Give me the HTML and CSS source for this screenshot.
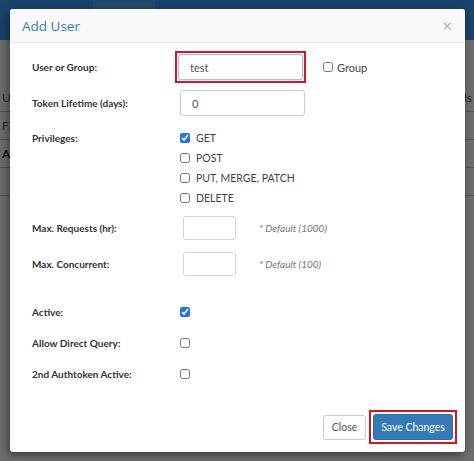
FILE: index.html
```html
<!DOCTYPE html>
<html>
<head>
<meta charset="utf-8">
<link rel="stylesheet" href="styles.css">
</head>
<body>
<div class="page">
  <div class="navbar"><span class="nav-active"></span></div>
  <div class="page-body">
    <div class="pg-row"><span class="pg-text">Users</span><span class="pg-text right">Tools</span></div>
    <div class="pg-row"><span class="pg-text">Filter</span></div>
    <div class="pg-row"><span class="pg-text bold">Auth</span></div>
    <div class="pg-row"></div>
  </div>
</div>
<div class="backdrop"></div>
<div class="modal">
  <div class="modal-header">
    <h4 class="modal-title">Add User</h4>
    <span class="close-x">&times;</span>
  </div>
  <div class="modal-body">
    <div class="form-row r-user">
      <label class="lbl">User or Group:</label>
      <div class="ctl">
        <span class="hl-box"><input class="txt focus" type="text" value="test"></span>
        <label class="grp"><input type="checkbox" class="cb"> Group</label>
      </div>
    </div>
    <div class="form-row r-token">
      <label class="lbl">Token Lifetime (days):</label>
      <div class="ctl"><input class="txt" type="text" value="0"></div>
    </div>
    <div class="form-row r-priv">
      <label class="lbl">Privileges:</label>
      <div class="ctl checks">
        <label class="chk"><input type="checkbox" class="cb" checked> GET</label>
        <label class="chk"><input type="checkbox" class="cb"> POST</label>
        <label class="chk"><input type="checkbox" class="cb"> PUT, MERGE, PATCH</label>
        <label class="chk"><input type="checkbox" class="cb"> DELETE</label>
      </div>
    </div>
    <div class="form-row r-num">
      <label class="lbl">Max. Requests (hr):</label>
      <div class="ctl"><input class="num" type="text"><span class="help">* Default (1000)</span></div>
    </div>
    <div class="form-row r-num">
      <label class="lbl">Max. Concurrent:</label>
      <div class="ctl"><input class="num" type="text"><span class="help">* Default (100)</span></div>
    </div>
    <div class="flags">
      <div class="form-row r-flag">
        <label class="lbl">Active:</label>
        <div class="ctl"><input type="checkbox" class="cb" checked></div>
      </div>
      <div class="form-row r-flag">
        <label class="lbl">Allow Direct Query:</label>
        <div class="ctl"><input type="checkbox" class="cb"></div>
      </div>
      <div class="form-row r-flag">
        <label class="lbl">2nd Authtoken Active:</label>
        <div class="ctl"><input type="checkbox" class="cb"></div>
      </div>
    </div>
  </div>
  <div class="modal-footer">
    <button class="btn btn-default">Close</button>
    <span class="hl-btn"><button class="btn btn-primary">Save Changes</button></span>
  </div>
</div>
</body>
</html>
```

FILE: styles.css
```css
* { box-sizing: border-box; }
html, body { margin: 0; padding: 0; }
body {
  width: 474px;
  height: 461px;
  overflow: hidden;
  position: relative;
  font-family: Lato, "Open Sans", sans-serif;
  color: #333;
  background: #f2f2f2;
}
.page { height: 461px; }
.navbar {
  height: 40px;
  background: #3b94ee;
  position: relative;
}
.nav-active {
  position: absolute;
  left: 93px;
  top: 0;
  width: 62px;
  height: 40px;
  background: #4ea2ea;
}
.page-body { padding-top: 44px; }
.pg-row {
  height: 28px;
  border-bottom: 1px solid #c0c0c0;
  display: flex;
  justify-content: space-between;
  align-items: center;
  padding: 0 2px;
  font-size: 12px;
  color: #555;
}
.pg-text.bold { font-weight: bold; color: #222; }
.backdrop {
  position: absolute;
  inset: 0;
  background: rgba(0, 0, 0, 0.55);
}
.modal {
  position: absolute;
  left: 10px;
  top: 9px;
  width: 455px;
  height: 443px;
  background: #fff;
  border-radius: 3px;
  box-shadow: -2px 3px 8px rgba(0,0,0,.45);
  display: flex;
  flex-direction: column;
}
.modal-header {
  height: 34px;
  background: #f7f9fb;
  border-bottom: 1px solid #e8e8e8;
  border-radius: 3px 3px 0 0;
  display: flex;
  align-items: center;
  justify-content: space-between;
  padding: 0 13px 0 12px;
}
.modal-title {
  margin: 0;
  font-family: "Open Sans", sans-serif;
  font-size: 13.5px;
  font-weight: normal;
  color: #3b7bb8;
}
.close-x {
  font-size: 17px;
  color: #b5b5b5;
  line-height: 1;
}
.modal-body {
  flex: 1;
  padding: 6px 0 0 22px;
}
.form-row {
  display: grid;
  grid-template-columns: 148px auto;
  align-items: center;
}
.lbl {
  font-size: 10px;
  font-weight: bold;
  color: #333;
}
.ctl {
  display: flex;
  align-items: center;
  font-size: 11px;
}
.r-user, .r-token, .r-num { height: 36px; }
.r-priv { margin-top: 7px; align-items: start; }
.r-priv .lbl { line-height: 20px; }
.r-priv + .r-num { margin-top: 2px; }
.flags { margin-top: 14px; }
.r-flag { height: 31px; }
.hl-box {
  display: inline-block;
  padding: 1px;
  border: 2px solid #d7141f;
  margin-left: -5px;
}
.txt {
  width: 125px;
  height: 26px;
  border: 1px solid #ccc;
  border-radius: 3px;
  padding: 0 11px;
  font-family: inherit;
  font-size: 11px;
  color: #555;
  outline: none;
}
.txt.focus {
  border-color: #9ec5e8;
  box-shadow: inset 0 1px 1px rgba(0,0,0,.05), 0 0 3px rgba(102,175,233,.5);
  margin: 0;
  display: block;
}
.cb {
  width: 10px;
  height: 10px;
  margin: 0;
  accent-color: #2b6fe0;
}
.grp {
  margin-left: 17px;
  display: flex;
  align-items: center;
  gap: 4px;
  font-size: 11px;
  color: #444;
}
.checks { flex-direction: column; align-items: flex-start; }
.chk {
  height: 20px;
  display: flex;
  align-items: center;
  gap: 6px;
  font-size: 10.5px;
  color: #444;
}
.num {
  width: 53px;
  height: 24px;
  border: 1px solid #d4d4d4;
  border-radius: 3px;
  margin-left: 3px;
  outline: none;
}
.help {
  margin-left: 23px;
  font-style: italic;
  font-size: 10px;
  color: #777;
}
.modal-footer {
  display: flex;
  justify-content: flex-end;
  align-items: center;
  gap: 3px;
  padding: 0 8px 8px 0;
}
.btn {
  font-family: inherit;
  font-size: 10.5px;
  border-radius: 3px;
  cursor: pointer;
}
.btn-default {
  height: 25px;
  width: 43px;
  background: #fff;
  border: 1px solid #ccc;
  color: #555;
  padding: 0;
}
.hl-btn {
  display: inline-block;
  padding: 2px;
  border: 2px solid #d7141f;
}
.btn-primary {
  display: block;
  height: 26px;
  width: 80px;
  padding: 0;
  background: #337ab7;
  border: 1px solid #2e6da4;
  color: #fff;
}
```
